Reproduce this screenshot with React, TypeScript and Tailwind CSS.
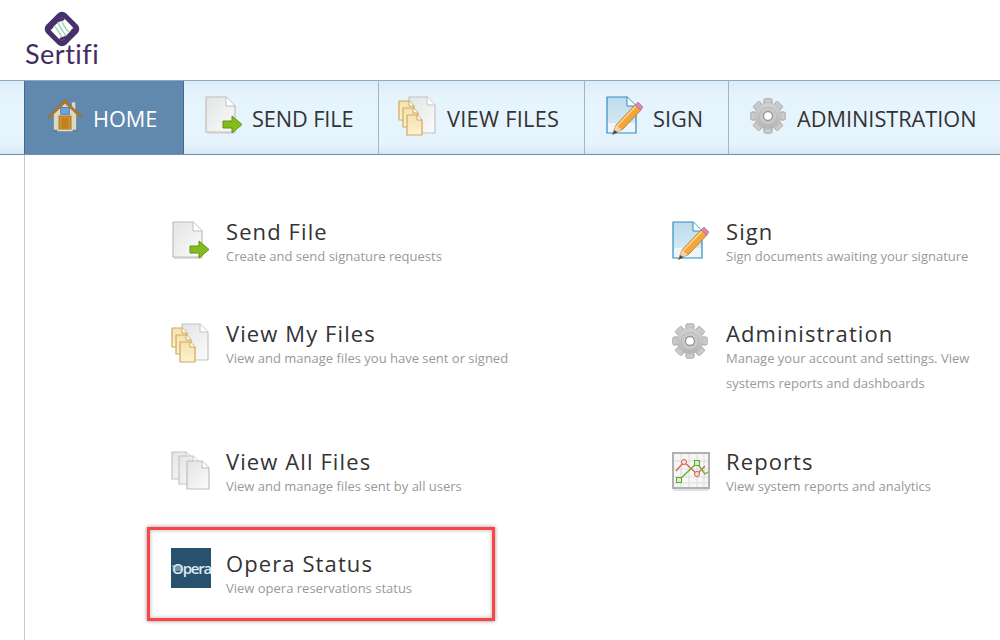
import React from 'react';

const sans = "font-['Open_Sans','Liberation_Sans',sans-serif]";

function Defs() {
  return (
    <svg width="0" height="0" className="absolute">
      <defs>
        <linearGradient id="paper" x1="0" y1="0" x2="1" y2="1">
          <stop offset="0" stopColor="#e3e4e4" />
          <stop offset="1" stopColor="#fbfbfb" />
        </linearGradient>
        <linearGradient id="yellow" x1="0" y1="0" x2="0" y2="1">
          <stop offset="0" stopColor="#f4e2ad" />
          <stop offset="1" stopColor="#fdf3d0" />
        </linearGradient>
        <linearGradient id="signpaper" x1="0" y1="0" x2="0" y2="1">
          <stop offset="0" stopColor="#bcdcec" />
          <stop offset="0.72" stopColor="#d3e8f3" />
          <stop offset="0.73" stopColor="#eef6fb" />
          <stop offset="1" stopColor="#eef6fb" />
        </linearGradient>
        <linearGradient id="gear" x1="0" y1="0" x2="0" y2="1">
          <stop offset="0" stopColor="#d2d2d2" />
          <stop offset="1" stopColor="#b4b4b4" />
        </linearGradient>
      </defs>
    </svg>
  );
}

function Sheet({ x, y, w, h, fill, stroke }: { x: number; y: number; w: number; h: number; fill: string; stroke: string }) {
  const f = Math.round(w * 0.3);
  return (
    <g>
      <path
        d={`M${x} ${y}H${x + w - f}L${x + w} ${y + f}V${y + h}H${x}Z`}
        fill={fill}
        stroke={stroke}
        strokeWidth="1.2"
        strokeLinejoin="round"
      />
      <path d={`M${x + w - f} ${y}V${y + f}H${x + w}`} fill="#fff" stroke={stroke} strokeWidth="1" />
    </g>
  );
}

function SendIcon({ size = 42 }: { size?: number }) {
  return (
    <svg width={size} height={size} viewBox="0 0 42 42">
      <rect x="4" y="37" width="28" height="2" fill="#ddd" />
      <Sheet x={3} y={2} w={29} h={35} fill="url(#paper)" stroke="#bdbdbd" />
      <path d="M20 26h9v-5l10 8.5-10 8.500v-5h-9z" fill="#86bb1c" stroke="#5f9410" strokeWidth="1" strokeLinejoin="round" />
    </svg>
  );
}

function FilesIcon({ size = 42, all = false }: { size?: number; all?: boolean }) {
  if (all) {
    return (
      <svg width={size} height={size} viewBox="0 0 42 42">
        <Sheet x={2} y={2} w={20} h={27} fill="url(#paper)" stroke="#c4c4c4" />
        <Sheet x={9} y={6} w={20} h={28} fill="url(#paper)" stroke="#c4c4c4" />
        <Sheet x={17} y={11} w={22} h={28} fill="url(#paper)" stroke="#bdbdbd" />
      </svg>
    );
  }
  return (
    <svg width={size} height={size} viewBox="0 0 42 42">
      <Sheet x={12} y={2} w={26} h={36} fill="url(#paper)" stroke="#c4c4c4" />
      <Sheet x={2} y={6} w={15} h={19} fill="url(#yellow)" stroke="#cda95a" />
      <Sheet x={6} y={13} w={15} h={19} fill="url(#yellow)" stroke="#cda95a" />
      <Sheet x={10} y={20} w={15} h={20} fill="url(#yellow)" stroke="#cda95a" />
    </svg>
  );
}

function SignIcon({ size = 42 }: { size?: number }) {
  return (
    <svg width={size} height={size} viewBox="0 0 42 42">
      <Sheet x={3} y={2} w={29} h={36} fill="url(#signpaper)" stroke="#2f8cc4" />
      <path d="M9 38l3-8 19-20 6 5-19 20z" fill="#f3a63a" stroke="#b9762a" strokeWidth="0.8" strokeLinejoin="round" />
      <path d="M13 31l19-20" stroke="#fbd98d" strokeWidth="1.5" />
      <path d="M31 10l3-3 5 5-2 3z" fill="#d985b5" stroke="#b5648f" strokeWidth="0.6" />
      <path d="M9 38l3-8 6 5z" fill="#e8d6b3" />
      <path d="M8 40l2.500-5 3 2.500z" fill="#4a4a4a" />
    </svg>
  );
}

function GearIcon({ size = 38 }: { size?: number }) {
  const teeth = [0, 45, 90, 135, 180, 225, 270, 315];
  return (
    <svg width={size} height={size} viewBox="0 0 42 42">
      {teeth.map((a) => (
        <rect
          key={a}
          x="16.500"
          y="2"
          width="9"
          height="10"
          rx="1.500"
          fill="url(#gear)"
          stroke="#a0a0a0"
          transform={`rotate(${a} 21 21)`}
        />
      ))}
      <circle cx="21" cy="21" r="14" fill="url(#gear)" />
      <circle cx="21" cy="21" r="9.500" fill="#c9c9c9" stroke="#b8b8b8" />
      <circle cx="21" cy="21" r="5" fill="#fff" stroke="#979797" strokeWidth="1.500" />
    </svg>
  );
}

function HomeIcon({ size = 36 }: { size?: number }) {
  return (
    <svg width={size} height={size} viewBox="0 0 42 42">
      <rect x="29" y="5" width="4" height="11" fill="#ddd9c8" />
      <path d="M8 18L21 5l13 13v19H8z" fill="#dcd8c2" />
      <path d="M1 22L21 2l20 20-2 1L21 6 3 23z" fill="#b9782a" stroke="#9b6420" strokeWidth="0.8" />
      <rect x="16" y="11" width="10" height="8" fill="#6ea4dc" stroke="#3f78bb" />
      <rect x="14" y="21" width="14" height="16" fill="#d2922c" stroke="#a66f1c" />
      <rect x="17" y="23" width="8" height="13" fill="#c2801f" />
      <rect x="12" y="37" width="18" height="2" fill="#fff" />
      <rect x="6" y="38" width="30" height="1.500" fill="#6a6a5c" opacity="0.5" />
    </svg>
  );
}

function ReportsIcon() {
  return (
    <svg width="42" height="42" viewBox="0 0 42 42">
      <rect x="3" y="3" width="36" height="35" fill="#f6f6f6" stroke="#b0b0b0" strokeWidth="2" />
      <rect x="3" y="39" width="36" height="2" fill="#e2e2e2" />
      <path d="M4 11h34M4 19h34M4 27h34M4 33h34M11 4v33M19 4v33M27 4v33M34 4v33" stroke="#dcdcdc" strokeWidth="1" />
      <path d="M6 21l8-9 13 12 8-8" fill="none" stroke="#dc6a5e" strokeWidth="1.500" />
      <path d="M9 30L27 13l8 11 3-2" fill="none" stroke="#6db33f" strokeWidth="1.500" />
      <circle cx="14" cy="12" r="2.500" fill="#f8e2dd" stroke="#d3594d" />
      <circle cx="27" cy="24" r="2.500" fill="#f8e2dd" stroke="#d3594d" />
      <rect x="6.500" y="27.500" width="5" height="5" fill="#d9eecb" stroke="#5da32f" />
      <rect x="24.500" y="10.500" width="5" height="5" fill="#d9eecb" stroke="#5da32f" />
    </svg>
  );
}

function OperaLogo() {
  return (
    <div className="relative -mt-[4px] ml-[1px] flex h-10 w-10 items-center justify-end overflow-hidden bg-[#265270]">
      <span className={`${sans} text-[15px] font-semibold leading-none tracking-[-1.2px] text-[#dfe8ee]`}>Opera</span>
      <svg width="14" height="10" viewBox="0 0 14 10" className="absolute left-[1px] top-[15px]">
        <path d="M0 3h10M3 5h8M1 7h10" stroke="#c5d6e0" strokeWidth="1" />
      </svg>
    </div>
  );
}

function NavItem({
  icon,
  label,
  width,
  active,
  last,
  gap,
  pad,
  track = '',
}: {
  icon: React.ReactNode;
  label: string;
  width: string;
  active?: boolean;
  last?: boolean;
  gap: string;
  pad: string;
  track?: string;
}) {
  return (
    <div
      className={`flex h-full items-center ${width} ${gap} ${pad} ${
        active ? 'bg-[#6189ad] text-white border-x border-[#3d6c96]' : 'text-[#333333]'
      } ${last ? '' : active ? '' : 'border-r border-[#9db6cc]'}`}
    >
      <div className="-mt-1 shrink-0">{icon}</div>
      <span className={`mt-[2px] text-[21.7px] leading-none whitespace-nowrap ${track}`}>{label}</span>
    </div>
  );
}

function Item({ icon, title, lines }: { icon: React.ReactNode; title: string; lines: string[] }) {
  return (
    <div className="flex gap-[14px]">
      <div className="h-[42px] w-[42px] shrink-0 pt-[1px]">{icon}</div>
      <div className="-mt-[1px]">
        <div className="text-[22px] leading-[26px] tracking-[1.1px] text-[#333333]">{title}</div>
        {lines.map((l) => (
          <div key={l} className="text-[13px] leading-[25px] text-[#999999] whitespace-nowrap">
            {l}
          </div>
        ))}
      </div>
    </div>
  );
}

export default function App() {
  return (
    <div className={`${sans} h-[640px] w-[1000px] overflow-hidden bg-white flex flex-col`}>
      <Defs />
      <div className="h-[80px] shrink-0 pl-[25px] flex flex-col items-start">
        <div className="w-[73px] flex flex-col items-center pt-[9px]">
          <svg width="40" height="40" viewBox="0 0 40 40">
            <rect x="6" y="6" width="28" height="28" rx="6" transform="rotate(45 20 20)" fill="#47306b" />
            <rect x="11" y="11" width="18" height="18" rx="4" transform="rotate(45 20 20)" fill="#ffffff" />
            <path d="M9 19c3-5 6-8 12-9" fill="none" stroke="#47306b" strokeWidth="3" strokeLinecap="round" />
            <path d="M31 21c-3 5-6 8-12 9" fill="none" stroke="#47306b" strokeWidth="3" strokeLinecap="round" />
            <path d="M16 13c1 5 5 9 8 14M20 12c1 4 4 8 7 11M13 17c2 4 5 7 7 11" fill="none" stroke="#a6d3bd" strokeWidth="1.500" />
          </svg>
        </div>
        <div className="font-['Lato','Open_Sans',sans-serif] text-[27px] leading-[26px] tracking-[0.5px] text-[#432d62] -mt-[8px]">Sertifi</div>
      </div>

      <div className="flex h-[75px] shrink-0 border-y border-t-[#8ba9c6] border-b-[#6a90b4] bg-[linear-gradient(#dcecf6,#e6f4fd_25%,#e6f4fd_85%,#d8e8f3)]">
        <div className="w-[24px] shrink-0" />
        <NavItem icon={<HomeIcon />} label="HOME" width="w-[160px]" active gap="gap-[10px]" pad="pl-[22px]" />
        <NavItem icon={<SendIcon />} label="SEND FILE" width="w-[195px]" gap="gap-[7px]" pad="pl-[19px]" track="tracking-[-0.1px]" />
        <NavItem icon={<FilesIcon />} label="VIEW FILES" width="w-[206px]" gap="gap-[8px]" pad="pl-[18px]" track="tracking-[0.3px]" />
        <NavItem icon={<SignIcon />} label="SIGN" width="w-[144px]" gap="gap-[7px]" pad="pl-[19px]" />
        <NavItem icon={<GearIcon />} label="ADMINISTRATION" width="flex-1" last gap="gap-[10px]" pad="pl-[20px]" />
      </div>

      <div className="ml-[24px] flex-1 border-l border-[#c8c8c8] pl-[145px] pt-[64px]">
        <div className="grid grid-cols-[500px_1fr] grid-rows-[102px_128px_102px_auto]">
          <Item icon={<SendIcon />} title="Send File" lines={['Create and send signature requests']} />
          <Item icon={<SignIcon />} title="Sign" lines={['Sign documents awaiting your signature']} />
          <Item icon={<FilesIcon />} title="View My Files" lines={['View and manage files you have sent or signed']} />
          <Item
            icon={
              <div className="ml-[1px]">
                <GearIcon />
              </div>
            }
            title="Administration"
            lines={['Manage your account and settings. View', 'systems reports and dashboards']}
          />
          <Item icon={<FilesIcon all />} title="View All Files" lines={['View and manage files sent by all users']} />
          <Item icon={<ReportsIcon />} title="Reports" lines={['View system reports and analytics']} />
          <div className="relative">
            <Item icon={<OperaLogo />} title="Opera Status" lines={['View opera reservations status']} />
            <div className="absolute left-[-23px] top-[-24px] h-[94px] w-[348px] border-[3px] border-[#fb4348] shadow-[0_0_4px_rgba(0,0,0,0.45),inset_0_0_4px_rgba(0,0,0,0.3)]" />
          </div>
        </div>
      </div>
    </div>
  );
}
